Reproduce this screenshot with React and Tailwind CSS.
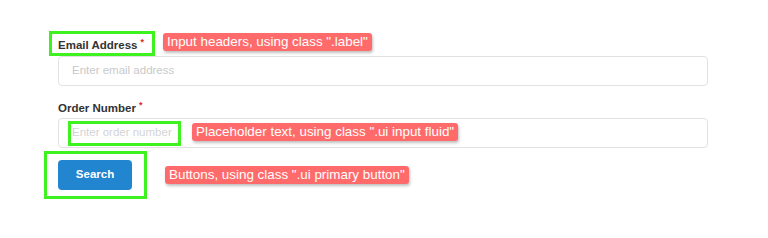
import React from "react";

const font = { fontFamily: '"Liberation Sans", Arial, Helvetica, sans-serif' };

function Tag({ children, className = "" }) {
  return (
    <span
      className={
        "inline-flex items-center h-[18px] px-[4px] rounded-[3px] bg-[#ff6b6b] text-white text-[13.4px] leading-none whitespace-nowrap shadow-[1px_2px_3px_rgba(0,0,0,0.25)] " +
        className
      }
    >
      {children}
    </span>
  );
}

function Label({ children }) {
  return (
    <div className="whitespace-nowrap text-[11.5px] leading-[14px] font-bold text-[#333]">
      {children}
      <span className="relative top-[-4px] ml-[3px] text-[#db2828] text-[9px] leading-none">*</span>
    </div>
  );
}

export default function App() {
  return (
    <div className="w-[768px] h-[238px] bg-white" style={font}>
      <div className="flex flex-col pl-[58px] pr-[60px] pt-[38px]">
        <div className="flex items-start h-[14px]">
          <div className="relative w-[105px] shrink-0">
            <Label>Email Address</Label>
            <span className="absolute left-[-9px] top-[-7px] w-[106px] h-[25px] border-[3px] border-[#3ef21f]" />
          </div>
          <Tag className="-mt-[5px]">Input headers, using class ".label"</Tag>
        </div>
        <div className="mt-[4px] h-[30px] rounded-[4px] border border-[#e2e2e2] flex items-center pl-[13px] text-[11.5px] text-[#c9c9c9]">
          Enter email address
        </div>
        <div className="mt-[15px] h-[14px]">
          <Label>Order Number</Label>
        </div>
        <div className="relative mt-[3px] h-[30px] rounded-[4px] border border-[#e2e2e2] flex items-center pl-[13px] text-[11.5px] text-[#d4d4d4]">
          Enter order number
          <span className="absolute left-[9px] top-[2px] w-[113px] h-[25px] border-[3px] border-[#3ef21f]" />
          <Tag className="absolute left-[133px] top-[4px]">Placeholder text, using class ".ui input fluid"</Tag>
        </div>
        <div className="mt-[12px] flex items-center">
          <div className="relative">
            <button className="w-[74px] h-[30px] rounded-[4px] bg-[#2185d0] text-white text-[11.5px] font-bold flex items-center justify-center">
              Search
            </button>
            <span className="absolute left-[-14px] top-[-9px] w-[103px] h-[48px] border-[3px] border-[#3ef21f]" />
          </div>
          <Tag className="ml-[33px]">Buttons, using class ".ui primary button"</Tag>
        </div>
      </div>
    </div>
  );
}
